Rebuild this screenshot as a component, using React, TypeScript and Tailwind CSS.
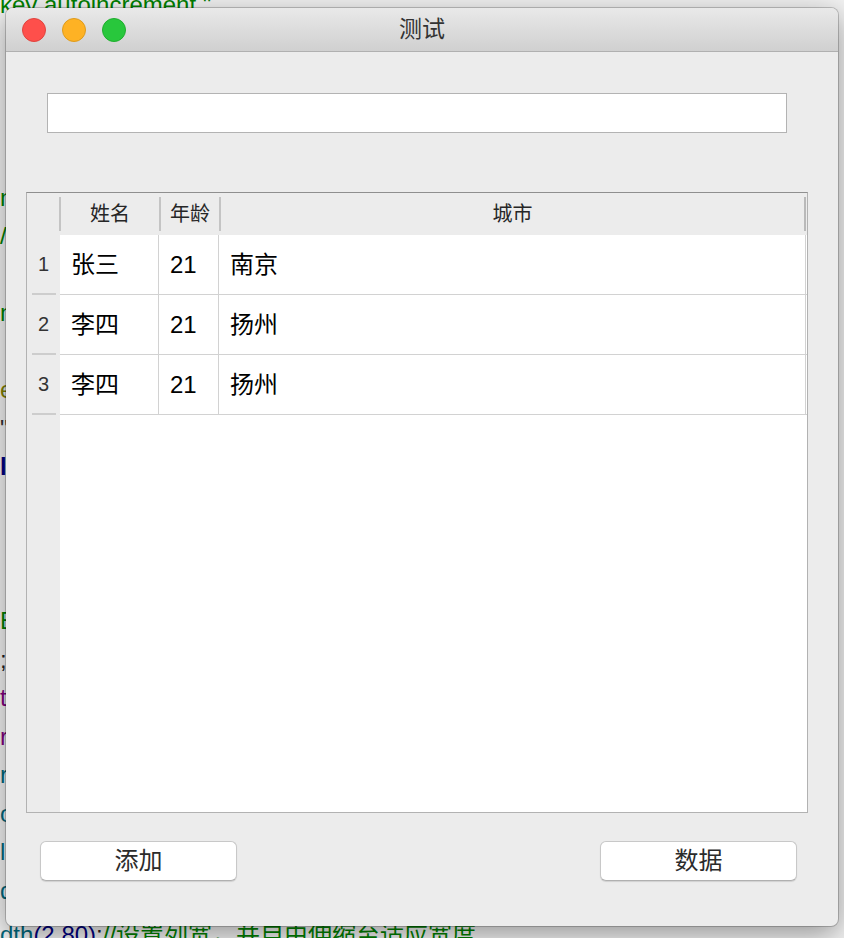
const font = { fontFamily: '"Liberation Sans", "Noto Sans CJK SC", sans-serif' };

type CodeLine = { text: string; color: string };

const codeLines: CodeLine[] = [
  { text: 'key autoincrement ",', color: 'text-[#008000]' },
  { text: '', color: '' },
  { text: '', color: '' },
  { text: '', color: '' },
  { text: '', color: '' },
  { text: 'name varchar(20),', color: 'text-[#008000]' },
  { text: '//', color: 'text-[#008000]' },
  { text: '', color: '' },
  { text: 'name varchar(20),', color: 'text-[#008000]' },
  { text: '', color: '' },
  { text: 'exec', color: 'text-[#808000]' },
  { text: '";', color: 'text-[#333333]' },
  { text: 'l', color: 'text-[#000080] font-bold' },
  { text: '', color: '' },
  { text: '', color: '' },
  { text: '', color: '' },
  { text: 'E', color: 'text-[#008000]' },
  { text: ';', color: 'text-[#222222]' },
  { text: 'table', color: 'text-[#800080]' },
  { text: 'row', color: 'text-[#800080]' },
  { text: 'rs', color: 'text-[#00677c]' },
  { text: 'o', color: 'text-[#00677c]' },
  { text: 'l', color: 'text-[#00677c]' },
  { text: 'd', color: 'text-[#00677c]' },
];

const rows = [
  { name: '张三', age: '21', city: '南京' },
  { name: '李四', age: '21', city: '扬州' },
  { name: '李四', age: '21', city: '扬州' },
];

function TrafficLights() {
  return (
    <div className="flex gap-4 pl-4">
      <span className="w-6 h-6 rounded-full bg-[#fe4f4b] border border-[#e0443e]" />
      <span className="w-6 h-6 rounded-full bg-[#feb224] border border-[#de9b1c]" />
      <span className="w-6 h-6 rounded-full bg-[#28c73c] border border-[#1fae2e]" />
    </div>
  );
}

function HeaderCell({ label, width, last }: { label: string; width: string; last?: boolean }) {
  return (
    <div className={`flex items-center h-full ${width}`}>
      <span className="w-[2px] h-[34px] bg-[#c4c4c4]" />
      <span className="flex-1 text-center text-[20px] text-[#262626]">{label}</span>
      {last && <span className="w-[2px] h-[34px] bg-[#b9b9b9]" />}
    </div>
  );
}

function DataTable() {
  return (
    <div className="ml-5 w-[782px] h-[621px] flex flex-col border border-[#b2b2b2] border-t-[#8f8f8f] bg-[#ececec]">
      <div className="h-[42px] flex shrink-0">
        <div className="w-[32px]" />
        <HeaderCell label="姓名" width="w-[100px]" />
        <HeaderCell label="年龄" width="w-[60px]" />
        <HeaderCell label="城市" width="flex-1" last />
        <div className="w-[1px]" />
      </div>
      <div className="flex flex-1">
        <div className="w-[33px] flex flex-col">
          {rows.map((_, i) => (
            <div key={i} className="h-[60px] flex flex-col items-center">
              <span className="flex-1 flex items-center text-[20px] text-[#333]">{i + 1}</span>
              <span className="w-[24px] h-[2px] bg-[#cdcdcd]" />
            </div>
          ))}
        </div>
        <div className="flex-1 bg-white">
          {rows.map((r, i) => (
            <div key={i} className="h-[60px] flex border-b border-[#d2d2d2] text-[24px] text-black">
              <div className="w-[99px] flex items-center pl-[11px] border-r border-[#d2d2d2]">{r.name}</div>
              <div className="w-[60px] flex items-center pl-[11px] border-r border-[#d2d2d2]">{r.age}</div>
              <div className="w-[587px] flex items-center pl-[11px] border-r border-[#d2d2d2]">{r.city}</div>
            </div>
          ))}
        </div>
      </div>
    </div>
  );
}

function MacButton({ label }: { label: string }) {
  return (
    <button className="w-[197px] h-[40px] rounded-[6px] bg-white border border-[#c8c8c8] border-b-[#b0b0b0] shadow-[0_1px_1px_rgba(0,0,0,0.12)] text-[24px] text-[#2b2b2b] leading-none">
      {label}
    </button>
  );
}

export default function App() {
  return (
    <div className="relative w-[844px] h-[938px] overflow-hidden bg-[#f2f2f2]" style={font}>
      {/* editor behind the window */}
      <div className="-mt-[14px] text-[24px] leading-[38.5px] whitespace-nowrap">
        {codeLines.map((l, i) => (
          <div key={i} className={`h-[38.5px] ${l.color}`}>
            {l.text}
          </div>
        ))}
        <div className="h-[38.5px] mt-[6px]">
          <span className="text-[#00677c]">dth</span>
          <span className="text-[#000080]">(2,80)</span>
          <span className="text-[#222]">;</span>
          <span className="text-[#008000]">//设置列宽，并自由伸缩至适应宽度</span>
        </div>
      </div>

      {/* window */}
      <div className="absolute left-[6px] top-[8px] w-[832px] h-[918px] rounded-[7px] bg-[#ececec] overflow-hidden flex flex-col shadow-[0_0_0_1px_rgba(0,0,0,0.2),0_8px_30px_rgba(0,0,0,0.4)]">
        <div className="h-[44px] shrink-0 relative flex items-center bg-gradient-to-b from-[#e9e9e9] to-[#d0d0d0] border-b border-[#b0b0b0]">
          <TrafficLights />
          <div className="absolute inset-0 flex items-center justify-center text-[23px] text-[#333] pointer-events-none">
            测试
          </div>
        </div>

        <div className="flex flex-col pt-[41px]">
          <div className="ml-[41px] w-[740px] h-[40px] bg-white border border-[#b3b3b3]" />
          <div className="mt-[59px]">
            <DataTable />
          </div>
          <div className="mt-[28px] flex justify-between pl-[34px] pr-[41px]">
            <MacButton label="添加" />
            <MacButton label="数据" />
          </div>
        </div>
      </div>
    </div>
  );
}
